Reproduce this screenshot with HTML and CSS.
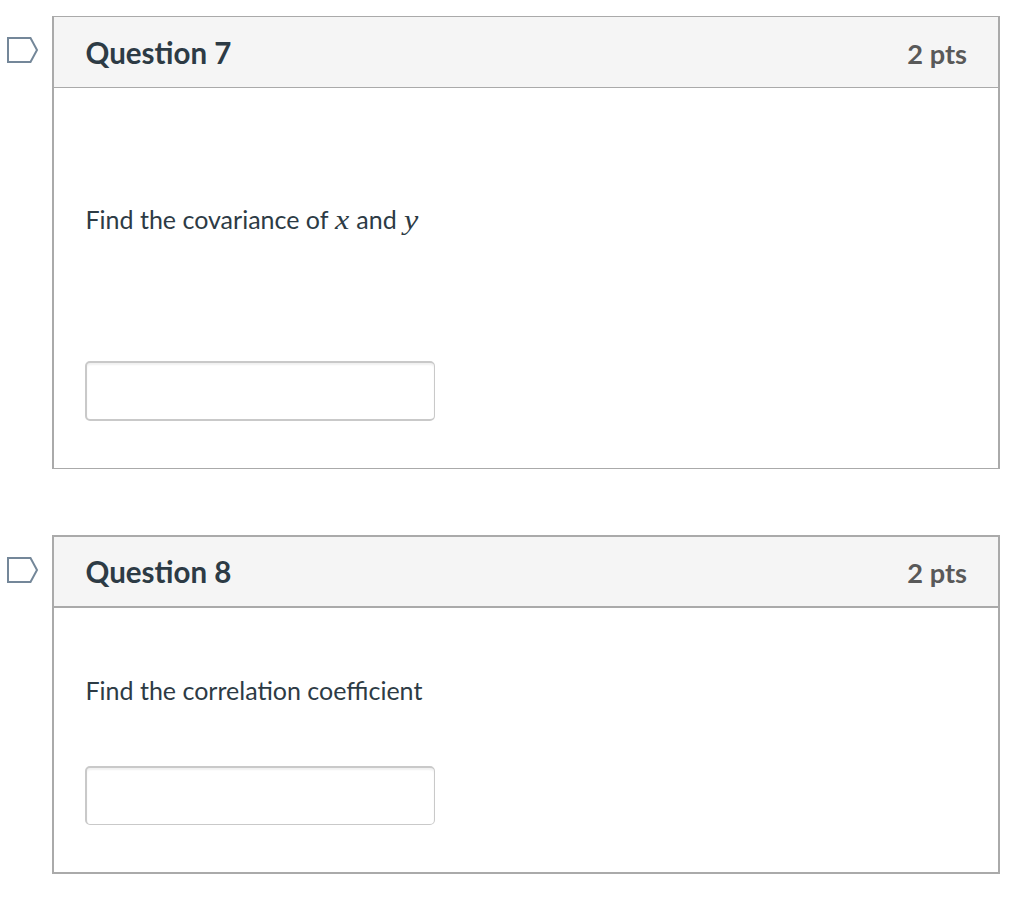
FILE: index.html
```html
<!DOCTYPE html>
<html lang="en">
<head>
	<meta charset="UTF-8">
	<title>Quiz</title>
	<link rel="stylesheet" href="styles.css">
</head>
<body>
	<div class="question_holder">
		<a href="#" class="flag_question" title="Flag question"><svg width="34" height="28" viewBox="0 0 34 28"><path d="M2 2H24.5L31 14L24.5 26H2Z"/></svg></a>
		<div class="question covariance">
			<div class="header">
				<h2>Question 7</h2>
				<span class="points">2 pts</span>
			</div>
			<div class="text">
				<p>Find the covariance of <i class="math">x</i> and <i class="math">y</i></p>
				<input type="text" class="answer">
			</div>
		</div>
	</div>
	<div class="question_holder">
		<a href="#" class="flag_question" title="Flag question"><svg width="34" height="28" viewBox="0 0 34 28"><path d="M2 2H24.5L31 14L24.5 26H2Z"/></svg></a>
		<div class="question correlation">
			<div class="header">
				<h2>Question 8</h2>
				<span class="points">2 pts</span>
			</div>
			<div class="text">
				<p>Find the correlation coefficient</p>
				<input type="text" class="answer">
			</div>
		</div>
	</div>
</body>
</html>
```
FILE: styles.css
```css
body{margin:0;padding:16px 24px 0 6px;background:#fff;color:#2d3b45;font-family:Lato,"Liberation Sans",sans-serif;font-size:25px;}
.question_holder{display:flex;align-items:flex-start;}
.question_holder + .question_holder{margin-top:66px;}
.flag_question{display:block;width:46px;padding-top:20px;line-height:0;}
.question_holder + .question_holder .flag_question{padding-top:21px;}
.flag_question svg{fill:#fff;stroke:#748799;stroke-width:2;}
.question{flex:1;border:2px solid #aaa;box-sizing:border-box;}
.header{display:flex;justify-content:space-between;align-items:center;height:70px;padding:0 31px 0 31.5px;background:#f5f5f5;border-bottom:1px solid #aaa;}
.header h2{margin:0;padding-top:1px;font-size:29.5px;line-height:36px;}
.points{font-size:27.2px;font-weight:bold;color:#595959;padding-top:2px;}
.text{padding:0 31px 47px;}
.text p{margin:0 0 0 .5px;height:38px;line-height:38px;}
.math{display:inline-block;font-family:"Liberation Serif",serif;font-size:28px;line-height:1;transform:scaleX(1.15);margin:0 1px 0 2px;}
.answer{display:block;box-sizing:border-box;width:350px;height:60px;border:2px solid #c9c9c9;border-right-width:1px;border-radius:5px;background:#fff;box-shadow:inset 0 2px 2px rgba(0,0,0,.06);}
.covariance{border-top-width:1px;border-bottom-width:1px;}
.covariance .text{padding-top:112px;}
.covariance p{margin-bottom:123px;}
.correlation .header{height:69px;border-bottom-width:2px;}
.correlation .text{padding-top:63px;}
.correlation p{margin-bottom:57px;}
.correlation .answer{height:59px;border-bottom-width:1px;}
```
